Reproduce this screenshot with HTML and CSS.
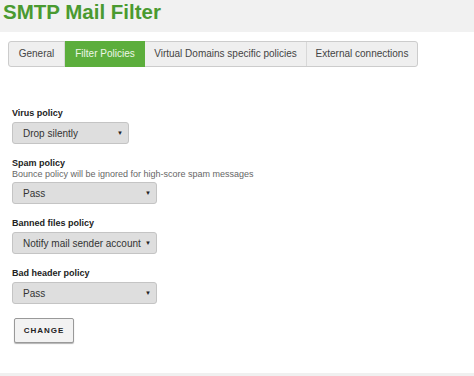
FILE: index.html
```html
<!DOCTYPE html>
<html>
<head>
    <title>SMTP Mail Filter</title>
    <link rel="stylesheet" href="styles.css">
</head>
<body>
    <div class="header">
        <h1>SMTP Mail Filter</h1>
    </div>
    <div class="tabs">
        <div class="tab t-general">General</div>
        <div class="tab t-filter active">Filter Policies</div>
        <div class="tab t-virtual">Virtual Domains specific policies</div>
        <div class="tab t-external">External connections</div>
    </div>

    <form class="policies">
        <div class="field">
            <label>Virus policy</label>
            <div class="select w-117"><span>Drop silently</span><span class="arrow">▼</span></div>
        </div>
        <div class="field">
            <label>Spam policy</label>
            <div class="help">Bounce policy will be ignored for high-score spam messages</div>
            <div class="select w-145"><span>Pass</span><span class="arrow">▼</span></div>
        </div>
        <div class="field">
            <label>Banned files policy</label>
            <div class="select w-145"><span>Notify mail sender account</span><span class="arrow">▼</span></div>
        </div>
        <div class="field">
            <label>Bad header policy</label>
            <div class="select w-145"><span>Pass</span><span class="arrow">▼</span></div>
        </div>
        <button type="button" class="button">CHANGE</button>
    </form>
    <div class="footer"></div>
</body>
</html>
```

FILE: styles.css
```css
body {
    font-family: 'Liberation Sans', Arial, sans-serif;
    margin: 0;
    width: 474px;
    height: 376px;
    overflow: hidden;
    background: #fff;
    color: #333;
}
.header {
    background: #f1f1f1;
    height: 32px;
    padding: 0 0 0 3px;
}
.header h1 {
    margin: 0;
    font-size: 20.5px;
    line-height: 24px;
    font-weight: bold;
    color: #4a9a30;
}
.tabs {
    display: flex;
    margin: 9px 0 0 8px;
    width: 410px;
    height: 26px;
    border: 1px solid #ccc;
    border-radius: 3px;
    background: #efefef;
    box-sizing: border-box;
}
.tab {
    flex-shrink: 0;
    white-space: nowrap;
    text-align: center;
    font-size: 10px;
    line-height: 24px;
    color: #444;
    border-right: 1px solid #d8d8d8;
    box-sizing: border-box;
}
.tab:last-child {
    border-right: none;
}
.t-general { width: 56px; }
.t-filter { width: 80px; }
.t-virtual { width: 162px; }
.t-external { width: 110px; }
.tab.active {
    background: #5cae3c;
    color: #eef7e8;
    margin: -1px 0;
    line-height: 26px;
    border-right: none;
}
.policies {
    padding: 41px 0 0 12px;
}
.field {
    margin-bottom: 14px;
}
.field label {
    display: block;
    font-size: 9px;
    font-weight: bold;
    line-height: 11px;
    color: #222;
}
.help {
    font-size: 9px;
    line-height: 10px;
    color: #666;
}
.select {
    display: flex;
    justify-content: space-between;
    align-items: center;
    margin-top: 3px;
    height: 22px;
    box-sizing: border-box;
    padding: 0 5px 0 10px;
    background: #dedede;
    border: 1px solid #c4c4c4;
    border-radius: 3px;
    font-size: 10px;
    white-space: nowrap;
    color: #333;
}
.select .arrow {
    font-size: 6px;
    color: #222;
}
.w-117 { width: 117px; }
.w-145 { width: 145px; }
.button {
    margin: 0 0 0 2px;
    width: 60px;
    height: 25px;
    font-family: 'Liberation Sans', Arial, sans-serif;
    font-size: 8px;
    font-weight: bold;
    letter-spacing: 1px;
    color: #222;
    background: #f2f2f2;
    border: 1px solid #999;
    border-radius: 2px;
    box-shadow: 0 1px 1px rgba(0, 0, 0, 0.3);
}
.footer {
    position: absolute;
    top: 373px;
    left: 0;
    width: 474px;
    height: 3px;
    background: #f0f0f0;
}
```
